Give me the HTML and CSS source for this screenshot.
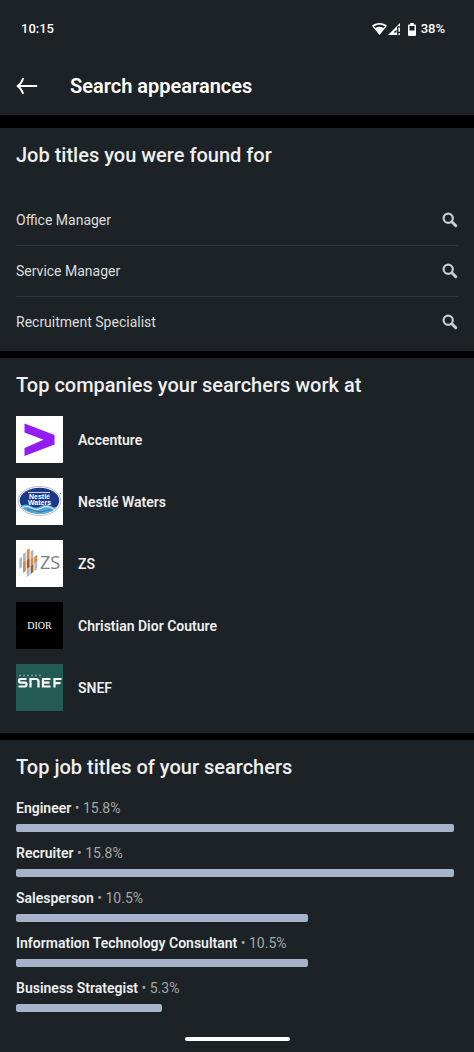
FILE: index.html
```html
<!DOCTYPE html>
<html lang="en">
<head>
<meta charset="utf-8">
<meta name="viewport" content="width=device-width, initial-scale=1">
<title>Search appearances</title>
<link rel="stylesheet" href="styles.css">
</head>
<body>
<svg class="defs" aria-hidden="true">
  <symbol id="search" viewBox="0 0 16 16">
    <circle cx="6.200" cy="6.200" r="4.600" fill="none" stroke="currentColor" stroke-width="2.200"/>
    <path d="M9.800 9.800 13.800 13.800" stroke="currentColor" stroke-width="3" stroke-linecap="round"/>
  </symbol>
</svg>
<header class="top">
  <div class="status">
    <span>10:15</span>
    <div class="status-icons">
      <svg width="15" height="12" viewBox="0 0 15 12" aria-hidden="true">
        <path d="M7.500 0C4.600 0 2 1 0 2.800L7.500 12 15 2.800C13 1 10.400 0 7.500 0Z" fill="currentColor"/>
        <path d="M2 3.400C5 1.300 10 1.300 13 3.400L11.700 5C9 3.400 6 3.400 3.300 5Z" fill="#1d2226"/>
      </svg>
      <svg width="13" height="12" viewBox="0 0 13 12" aria-hidden="true">
        <path d="M0 12 12 0V3.500H9.500V12Z" fill="currentColor"/>
        <path d="M5.500 9.500 8.500 6.500V9.500Z" fill="#1d2226"/>
        <path d="M9.200 3.500H12V12H9.200Z" fill="#1d2226"/>
        <path d="M11.200 4.500V8.800M11.200 10.300V12" stroke="currentColor" stroke-width="1.500"/>
      </svg>
      <svg class="battery" width="8" height="13" viewBox="0 0 8 13" aria-hidden="true">
        <path d="M2.300 0H5.700V1.500H7A1 1 0 0 1 8 2.500V12A1 1 0 0 1 7 13H1A1 1 0 0 1 0 12V2.500A1 1 0 0 1 1 1.500H2.300Z" fill="currentColor"/>
        <path d="M1.500 3H6.500V7.500H1.500Z" fill="#1d2226"/>
      </svg>
      <span>38%</span>
    </div>
  </div>
  <div class="title-bar">
    <button class="back" type="button" aria-label="Back">
      <svg width="22" height="18" viewBox="0 0 22 18" fill="none" stroke="currentColor" stroke-width="1.900" stroke-linecap="round" stroke-linejoin="round"><path d="M20.500 9H1.500M7 1.800C5.500 5.500 4 7.500 1.500 9C4 10.500 5.500 12.500 7 16.200"/></svg>
    </button>
    <h1 class="title">Search appearances</h1>
  </div>
</header>
<main class="content">
  <section class="panel found">
    <h2 class="heading">Job titles you were found for</h2>
    <ul class="titles">
      <li><a class="title-link" href="#">Office Manager<svg width="16" height="16"><use href="#search"/></svg></a></li>
      <li><a class="title-link" href="#">Service Manager<svg width="16" height="16"><use href="#search"/></svg></a></li>
      <li><a class="title-link" href="#">Recruitment Specialist<svg width="16" height="16"><use href="#search"/></svg></a></li>
    </ul>
  </section>
  <section class="panel companies">
    <h2 class="heading">Top companies your searchers work at</h2>
    <ul class="company-list">
      <li class="company">
        <svg class="logo" viewBox="0 0 47 47" aria-hidden="true"><path fill="#fff" d="M0 0H47V47H0Z"/><path fill="#951bf5" d="M8.500 7.500 38.500 19V28.500L8.500 40V32L27.500 23.800 8.500 16.500Z"/></svg>
        <span>Accenture</span>
      </li>
      <li class="company">
        <svg class="logo" viewBox="0 0 47 47" aria-hidden="true">
          <path fill="#fff" d="M0 0H47V47H0Z"/>
          <ellipse cx="23.500" cy="23" rx="21.300" ry="14.500" fill="#fff" stroke="#a3acb9" stroke-width="0.800"/>
          <ellipse cx="23.500" cy="22.500" rx="19.800" ry="12.800" fill="#1c388b"/>
          <path d="M4.500 28Q10 25 15 28T25 28T35 28T42.500 27C39 33 32 36 23.500 36S8 33 4.500 28Z" fill="#55a5d6"/>
          <path d="M6 29.500Q11 27 15.500 30T25.500 30T35.500 30T41 29.500" fill="none" stroke="#c4e6f5" stroke-width="1.300"/>
          <path d="M11 32Q16 31 20 33T29 33T36 32" fill="none" stroke="#2878b7" stroke-width="1"/>
          <path d="M12 14.500H34" stroke="#fff" stroke-width="0.800"/>
          <text class="nestle-text" x="23.500" y="20.500">Nestlé</text>
          <text class="nestle-text" x="23.500" y="26.500">Waters</text>
          <circle cx="44.500" cy="15.500" r="0.700" fill="#667"/>
        </svg>
        <span>Nestlé Waters</span>
      </li>
      <li class="company">
        <svg class="logo" viewBox="0 0 47 47" aria-hidden="true">
          <path fill="#fff" d="M0 0H47V47H0Z"/>
          <path fill="#a8b8c5" d="M3.300 18.500 6 17V27L3.300 29ZM7 14 9.800 12V20L7 22ZM10.800 29 13.600 27V35L10.800 37ZM14.600 11.500 17.400 9.500V17L14.600 19ZM18.400 17 21.200 15V29L18.400 31Z"/>
          <path fill="#d58a46" d="M7 22 9.800 20V31L7 33ZM10.800 10 13.600 8V18L10.800 20ZM14.600 19 17.400 17V24L14.600 26ZM18.400 17 21.200 15V21L18.400 23Z"/>
          <path fill="#9a5d33" d="M10.800 20 13.600 18V27L10.800 29ZM14.600 26 17.400 24V32L14.600 34Z"/>
          <text class="zs-text" x="24" y="29">ZS</text>
        </svg>
        <span>ZS</span>
      </li>
      <li class="company">
        <svg class="logo" viewBox="0 0 47 47" aria-hidden="true"><path d="M0 0H47V47H0Z"/><text class="dior-text" x="23.500" y="27">DIOR</text></svg>
        <span>Christian Dior Couture</span>
      </li>
      <li class="company">
        <svg class="logo" viewBox="0 0 47 47" aria-hidden="true">
          <path fill="#245a54" d="M0 0H47V47H0Z"/>
          <path d="M3 11.500H27" stroke="#75a09a" stroke-width="1.300" stroke-dasharray="2 2"/>
          <g fill="none" stroke="#fff" stroke-width="2.200">
            <path d="M10.500 15H4.500Q3 15 3 16.800T4.500 18.700H9Q10.500 18.700 10.500 20.600T9 22.500H2.500"/>
            <path d="M14.500 23.500V15H20Q22.500 15 22.500 17.500V23.500"/>
            <path d="M34.500 15H27V22.500H34.500M27 18.700H33.500M38.500 23.500V15H45.500M38.500 19.200H44.500"/>
          </g>
        </svg>
        <span>SNEF</span>
      </li>
    </ul>
  </section>
  <section class="panel searchers">
    <h2 class="heading">Top job titles of your searchers</h2>
    <ul class="stats">
      <li class="stat"><p class="stat-label"><b>Engineer</b> • 15.8%</p><div class="bar" style="width:99%"></div></li>
      <li class="stat"><p class="stat-label"><b>Recruiter</b> • 15.8%</p><div class="bar" style="width:99%"></div></li>
      <li class="stat"><p class="stat-label"><b>Salesperson</b> • 10.5%</p><div class="bar" style="width:66%"></div></li>
      <li class="stat"><p class="stat-label"><b>Information Technology Consultant</b> • 10.5%</p><div class="bar" style="width:66%"></div></li>
      <li class="stat"><p class="stat-label"><b>Business Strategist</b> • 5.3%</p><div class="bar" style="width:33%"></div></li>
    </ul>
    <div class="home-indicator"></div>
  </section>
</main>
</body>
</html>
```
FILE: styles.css
```css
* { box-sizing: border-box; }
body {
  margin: 0;
  background: #000;
  color: #eeeff0;
  font-family: Roboto, "Liberation Sans", sans-serif;
  font-size: 14px;
  line-height: 20px;
}
h1, h2, p, ul { margin: 0; padding: 0; }
ul { list-style: none; }
.defs { position: absolute; width: 0; height: 0; }
.top { background: #1d2226; color: #fff; padding-bottom: 1px; }
.status {
  display: flex;
  align-items: center;
  justify-content: space-between;
  height: 58px;
  padding: 0 29px 0 21px;
  font-size: 13px;
  font-weight: 500;
}
.status-icons { display: flex; align-items: center; gap: 1px; }
.battery { margin: 0 4px 0 6px; }
.title-bar { display: flex; align-items: center; height: 56px; padding: 0 16px; }
.back {
  display: flex;
  width: 54px;
  padding: 0;
  border: 0;
  background: none;
  color: inherit;
}
.title { font-size: 20px; line-height: 28px; font-weight: 600; }
.content { display: flex; flex-direction: column; gap: 7px; margin-top: 13px; }
.panel { background: #1d2226; padding: 13px 16px 0; }
.heading { font-size: 20px; line-height: 28px; font-weight: 500; margin-bottom: 17px; }
.found { padding-bottom: 3px; }
.titles { padding-top: 9px; }
.titles li { border-bottom: 1px solid #33373b; }
.titles li:last-child { border-bottom-color: transparent; }
.title-link {
  display: flex;
  align-items: center;
  justify-content: space-between;
  height: 50px;
  color: #dcddde;
  text-decoration: none;
}
.title-link svg { color: #c9cbcd; }
.companies { padding-bottom: 22px; }
.company-list { display: grid; gap: 15px; }
.company { display: flex; align-items: center; gap: 15px; font-weight: 600; }
.logo { width: 47px; height: 47px; }
.nestle-text { font: bold 7px "Liberation Sans", sans-serif; fill: #fff; text-anchor: middle; }
.zs-text { font: 18px "Open Sans", sans-serif; fill: #7b7b7b; }
.dior-text { font: 10px "Liberation Serif", serif; fill: #fff; text-anchor: middle; }
.stats { display: grid; gap: 11px; }
.stat-label { color: #a4a7a9; margin-bottom: 6px; }
.stat-label b { color: #eeeff0; font-weight: 600; }
.bar { height: 8px; border-radius: 2px; background: #a5b4cb; }
.searchers { padding-bottom: 11px; }
.home-indicator { width: 105px; height: 4px; margin: 25px auto 0; border-radius: 2px; background: #fff; }
```
